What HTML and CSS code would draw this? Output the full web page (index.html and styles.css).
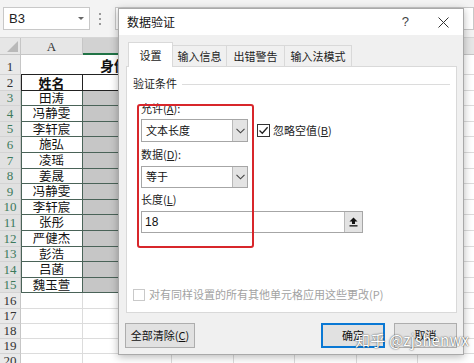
FILE: index.html
```html
<!DOCTYPE html>
<html lang="zh-CN">
<head>
<meta charset="utf-8">
<title>数据验证</title>
<link rel="stylesheet" href="styles.css">
</head>
<body>
<div class="screen">
  <div class="toolbar">
    <div class="namebox"><span>B3</span><span class="nb-arrow"></span></div>
    <div class="dots"><i></i><i></i><i></i></div>
    <div class="formula"></div>
  </div>

  <div class="sheet">
    <div class="corner"><span class="tri"></span></div>
    <div class="ch">A</div><div class="ch sel">B</div><div class="ch">C</div><div class="ch">D</div><div class="ch">E</div><div class="ch">F</div><div class="ch">G</div>

    <div class="rh">1</div><div class="c title">身份证号码</div><div class="c"></div><div class="c"></div><div class="c"></div><div class="c"></div><div class="c"></div>

    <div class="rh">2</div><div class="c ta hd">姓名</div><div class="c tb hd"></div><div class="c"></div><div class="c"></div><div class="c"></div><div class="c"></div><div class="c"></div>

    <div class="rh s">3</div><div class="c ta">田涛</div><div class="c tb"></div><div class="c"></div><div class="c"></div><div class="c"></div><div class="c"></div><div class="c"></div>
    <div class="rh s">4</div><div class="c ta">冯静雯</div><div class="c tb"></div><div class="c"></div><div class="c"></div><div class="c"></div><div class="c"></div><div class="c"></div>
    <div class="rh s">5</div><div class="c ta">李轩宸</div><div class="c tb"></div><div class="c"></div><div class="c"></div><div class="c"></div><div class="c"></div><div class="c"></div>
    <div class="rh s">6</div><div class="c ta">施弘</div><div class="c tb"></div><div class="c"></div><div class="c"></div><div class="c"></div><div class="c"></div><div class="c"></div>
    <div class="rh s">7</div><div class="c ta">凌瑶</div><div class="c tb"></div><div class="c"></div><div class="c"></div><div class="c"></div><div class="c"></div><div class="c"></div>
    <div class="rh s">8</div><div class="c ta">姜晟</div><div class="c tb"></div><div class="c"></div><div class="c"></div><div class="c"></div><div class="c"></div><div class="c"></div>
    <div class="rh s">9</div><div class="c ta">冯静雯</div><div class="c tb"></div><div class="c"></div><div class="c"></div><div class="c"></div><div class="c"></div><div class="c"></div>
    <div class="rh s">10</div><div class="c ta">李轩宸</div><div class="c tb"></div><div class="c"></div><div class="c"></div><div class="c"></div><div class="c"></div><div class="c"></div>
    <div class="rh s">11</div><div class="c ta">张彤</div><div class="c tb"></div><div class="c"></div><div class="c"></div><div class="c"></div><div class="c"></div><div class="c"></div>
    <div class="rh s">12</div><div class="c ta">严健杰</div><div class="c tb"></div><div class="c"></div><div class="c"></div><div class="c"></div><div class="c"></div><div class="c"></div>
    <div class="rh s">13</div><div class="c ta">彭浩</div><div class="c tb"></div><div class="c"></div><div class="c"></div><div class="c"></div><div class="c"></div><div class="c"></div>
    <div class="rh s">14</div><div class="c ta">吕菡</div><div class="c tb"></div><div class="c"></div><div class="c"></div><div class="c"></div><div class="c"></div><div class="c"></div>
    <div class="rh s">15</div><div class="c ta">魏玉萱</div><div class="c tb"></div><div class="c"></div><div class="c"></div><div class="c"></div><div class="c"></div><div class="c"></div>

    <div class="rh">16</div><div class="c"></div><div class="c"></div><div class="c"></div><div class="c"></div><div class="c"></div><div class="c"></div><div class="c"></div>
    <div class="rh">17</div><div class="c"></div><div class="c"></div><div class="c"></div><div class="c"></div><div class="c"></div><div class="c"></div><div class="c"></div>
    <div class="rh">18</div><div class="c"></div><div class="c"></div><div class="c"></div><div class="c"></div><div class="c"></div><div class="c"></div><div class="c"></div>
    <div class="rh">19</div><div class="c"></div><div class="c"></div><div class="c"></div><div class="c"></div><div class="c"></div><div class="c"></div><div class="c"></div>
    <div class="rh">20</div><div class="c"></div><div class="c"></div><div class="c"></div><div class="c"></div><div class="c"></div><div class="c"></div><div class="c"></div>
  </div>

  <div class="dialog">
    <div class="titlebar">
      <span class="dtitle">数据验证</span>
      <span class="help">?</span>
      <span class="close">
        <svg width="11" height="11" viewBox="0 0 11 11"><path d="M0.5 0.5 L10.5 10.5 M10.5 0.5 L0.5 10.5" stroke="#333" stroke-width="1" fill="none"/></svg>
      </span>
    </div>
    <div class="tabs">
      <div class="tab active w1">设置</div>
      <div class="tab w2">输入信息</div>
      <div class="tab w3">出错警告</div>
      <div class="tab w4">输入法模式</div>
    </div>
    <div class="panel">
      <div class="legend"><span>验证条件</span><span class="rule"></span></div>
      <div class="fields">
        <div class="lbl l1">允许(<u>A</u>):</div>
        <div class="row">
          <div class="select s1"><span class="val">文本长度</span><span class="arrow"><svg width="9" height="6" viewBox="0 0 9 6"><path d="M0.5 0.8 L4.5 4.8 L8.5 0.8" stroke="#444" stroke-width="1.1" fill="none"/></svg></span></div>
          <div class="chk">
            <span class="box"><svg width="11" height="11" viewBox="0 0 11 11"><path d="M1.5 5.5 L4.3 8.3 L9.6 2.2" stroke="#222" stroke-width="1.3" fill="none"/></svg></span>
            <span>忽略空值(<u>B</u>)</span>
          </div>
        </div>
        <div class="lbl l2">数据(<u>D</u>):</div>
        <div class="select s2"><span class="val">等于</span><span class="arrow"><svg width="9" height="6" viewBox="0 0 9 6"><path d="M0.5 0.8 L4.5 4.8 L8.5 0.8" stroke="#444" stroke-width="1.1" fill="none"/></svg></span></div>
        <div class="lbl l3">长度(<u>L</u>)</div>
        <div class="input"><span class="val">18</span><span class="pick"><svg width="9" height="10" viewBox="0 0 9 10"><path d="M4.5 0.5 L8.5 4.5 L6 4.5 L6 7 L3 7 L3 4.5 L0.5 4.5 Z" fill="#111"/><rect x="0.5" y="8.2" width="8" height="1.3" fill="#111"/></svg></span></div>
      </div>
      <div class="apply"><span class="box dis"></span><span>对有同样设置的所有其他单元格应用这些更改(P)</span></div>
    </div>
    <div class="buttons">
      <div class="btn clear">全部清除(<u>C</u>)</div>
      <div class="btn ok">确定</div>
      <div class="btn cancel">取消</div>
    </div>
  </div>

  <div class="redbox"></div>
  <div class="watermark">知乎 @zjshenwx</div>
</div>
</body>
</html>
```

FILE: styles.css
```css
* { box-sizing: border-box; }
html, body { margin: 0; padding: 0; background: #fff; }
.screen {
  position: relative;
  width: 474px;
  height: 363px;
  overflow: hidden;
  background: #fff;
  font-family: "Noto Sans CJK SC", "Noto Sans", sans-serif;
}

/* toolbar */
.toolbar {
  height: 38px;
  background: #f3f3f3;
  display: flex;
  align-items: center;
  padding-left: 3px;
  border-bottom: 1px solid #d6d6d6;
}
.namebox {
  width: 87px;
  height: 23px;
  background: #fff;
  border: 1px solid #c8c8c8;
  display: flex;
  align-items: center;
  justify-content: space-between;
  padding: 0 5px 0 5px;
  font-family: "Liberation Sans", sans-serif;
  font-size: 13px;
  color: #222;
}
.nb-arrow {
  width: 0; height: 0;
  border-left: 3px solid transparent;
  border-right: 3px solid transparent;
  border-top: 3px solid #666;
}
.dots {
  display: flex;
  flex-direction: column;
  gap: 3px;
  margin-left: 9px;
}
.dots i { display: block; width: 2px; height: 2px; background: #9a9a9a; }
.formula {
  margin-left: 14px;
  flex: 1;
  height: 23px;
  background: #fff;
  border: 1px solid #c8c8c8;
}

/* sheet */
.sheet {
  display: grid;
  grid-template-columns: 21px 62px 89px 62px 61px 62px 61px 62px;
  grid-template-rows: 17px 20px repeat(14, 15.6px) repeat(5, 15.2px);
  font-size: 13px;
  color: #111;
}
.corner {
  background: #e6e6e6;
  border-right: 1px solid #c6c6c6;
  border-bottom: 1px solid #c6c6c6;
  position: relative;
}
.tri {
  position: absolute;
  right: 2px; bottom: 2px;
  width: 0; height: 0;
  border-left: 11px solid transparent;
  border-bottom: 11px solid #b9b9b9;
}
.ch {
  background: #e6e6e6;
  border-right: 1px solid #c6c6c6;
  border-bottom: 1px solid #c6c6c6;
  font-family: "Liberation Serif", serif;
  font-size: 13px;
  line-height: 1;
  color: #333;
  display: flex;
  align-items: center;
  justify-content: center;
}
.ch.sel { background: #d2d2d2; border-bottom: 2px solid #217346; }
.rh {
  background: #e9e9e9;
  border-right: 1px solid #c6c6c6;
  border-bottom: 1px solid #d3d3d3;
  font-family: "Liberation Serif", serif;
  font-size: 13px;
  color: #333;
  display: flex;
  align-items: flex-end;
  justify-content: center;
  line-height: 14px;
}
.rh.s { background: #e1e1e1; color: #3d7a5c; }
.c {
  border-right: 1px solid #dcdcdc;
  border-bottom: 1px solid #dcdcdc;
  display: flex;
  align-items: center;
  justify-content: center;
  white-space: nowrap;
  line-height: 1;
  font-size: 12.5px;
}
.c.title {
  grid-column: span 2;
  justify-content: flex-start;
  padding-left: 79px;
  font-weight: bold;
  font-size: 14px;
  border-bottom: 1px solid #222;
  border-right: 1px solid #dcdcdc;
}
.c.ta {
  border-right: 1px solid #4a6358;
  border-bottom: 1px solid #4a6358;
  box-shadow: inset 1px 0 0 #4a6358;
}
.c.tb {
  background: #c6c6c6;
  border-right: 1px solid #4a6358;
  border-bottom: 1px solid #4a6358;
}
.c.hd { font-weight: bold; font-size: 13px; border-color: #222; box-shadow: inset 1px 0 0 #222; }
.c.tb.hd { background: #fff; box-shadow: none; }

/* dialog */
.dialog {
  position: absolute;
  left: 118px;
  top: 8px;
  width: 346px;
  height: 347px;
  background: #f0f0f0;
  border: 1px solid #a9a9a9;
  box-shadow: 0 2px 8px rgba(0,0,0,0.28);
  display: flex;
  flex-direction: column;
  font-size: 11px;
  line-height: 1.2;
  color: #111;
}
.titlebar {
  height: 26px;
  background: #fff;
  display: flex;
  align-items: center;
  padding-left: 8px;
  flex-shrink: 0;
}
.dtitle { font-size: 12px; color: #111; }
.help { margin-left: auto; font-family: "Liberation Sans", sans-serif; font-size: 13px; color: #444; }
.close { margin-left: 29px; margin-right: 14px; display: flex; }
.tabs {
  display: flex;
  align-items: flex-end;
  height: 24px;
  margin: 7px 0 0 9px;
  position: relative;
  z-index: 1;
}
.tab {
  height: 21px;
  display: flex;
  align-items: center;
  justify-content: center;
  background: #f0f0f0;
  border: 1px solid #d9d9d9;
  border-bottom: none;
  margin-right: -1px;
  font-size: 11px;
  line-height: 1;
  color: #222;
}
.tab.active { background: #fff; margin-bottom: -1px; height: 25px; }
.w1 { width: 45px; }
.w2 { width: 55px; }
.w3 { width: 59px; }
.w4 { width: 68px; }
.panel {
  margin-left: 7px;
  width: 331px;
  height: 247px;
  background: #fff;
  border: 1px solid #d9d9d9;
  flex-shrink: 0;
}
.legend {
  height: 34px;
  display: flex;
  align-items: center;
  padding-left: 6px;
  color: #222;
}
.rule { flex: 1; height: 1px; background: #dcdcdc; margin: 0 6px 0 5px; }
.fields { padding-left: 14px; }
.lbl { height: 18px; display: flex; align-items: center; color: #222; line-height: 1; }
.lbl.l1 { padding-bottom: 3px; }
.lbl.l2 { height: 24px; }
.lbl.l3 { height: 23px; }
.row { display: flex; align-items: center; }
.select {
  width: 107px;
  height: 23px;
  border: 1px solid #a6a6a6;
  display: flex;
  align-items: center;
  background: #fff;
}
.select.s2 { height: 22px; }
.val { flex: 1; padding-left: 4px; font-size: 11px; color: #111; }
.arrow {
  width: 15px;
  height: 100%;
  background: #e3e3e3;
  border-left: 1px solid #b9b9b9;
  display: flex;
  align-items: center;
  justify-content: center;
}
.chk { display: flex; align-items: center; margin-left: 9px; gap: 3px; color: #222; }
.box {
  width: 13px;
  height: 13px;
  border: 1px solid #333;
  background: #fff;
  display: flex;
  align-items: center;
  justify-content: center;
}
.input {
  width: 222px;
  height: 22px;
  border: 1px solid #a6a6a6;
  display: flex;
  align-items: center;
}
.input .val { font-family: "Liberation Sans", sans-serif; font-size: 12px; padding-left: 3px; }
.pick {
  width: 18px;
  height: 100%;
  background: #e3e3e3;
  border-left: 1px solid #b9b9b9;
  display: flex;
  align-items: center;
  justify-content: center;
}
.apply {
  margin-top: 55px;
  padding-left: 6px;
  display: flex;
  align-items: center;
  gap: 4px;
  color: #a2a2a2;
}
.box.dis { width: 12px; height: 12px; border-color: #c9c9c9; }
.buttons {
  display: flex;
  margin-top: 10px;
  padding-left: 6px;
}
.btn {
  height: 25px;
  background: #e1e1e1;
  border: 1px solid #adadad;
  display: flex;
  align-items: center;
  justify-content: center;
  font-size: 11px;
  line-height: 1;
  color: #111;
}
.btn.clear { width: 70px; }
.btn.ok { width: 64px; margin-left: auto; border: 2px solid #0a78d4; }
.btn.cancel { width: 63px; margin-left: 9px; margin-right: 6px; }

/* annotation */
.redbox {
  position: absolute;
  left: 137px;
  top: 104px;
  width: 117px;
  height: 144px;
  border: 2.5px solid #d8262b;
  border-radius: 3px;
}
.watermark {
  position: absolute;
  left: 355px;
  top: 332px;
  font-size: 15px;
  line-height: 1.1;
  color: #fff;
  letter-spacing: 0.2px;
  text-shadow: 0 0 2px rgba(0,0,0,0.55), 0 0 1px rgba(0,0,0,0.5);
  white-space: nowrap;
}
```
